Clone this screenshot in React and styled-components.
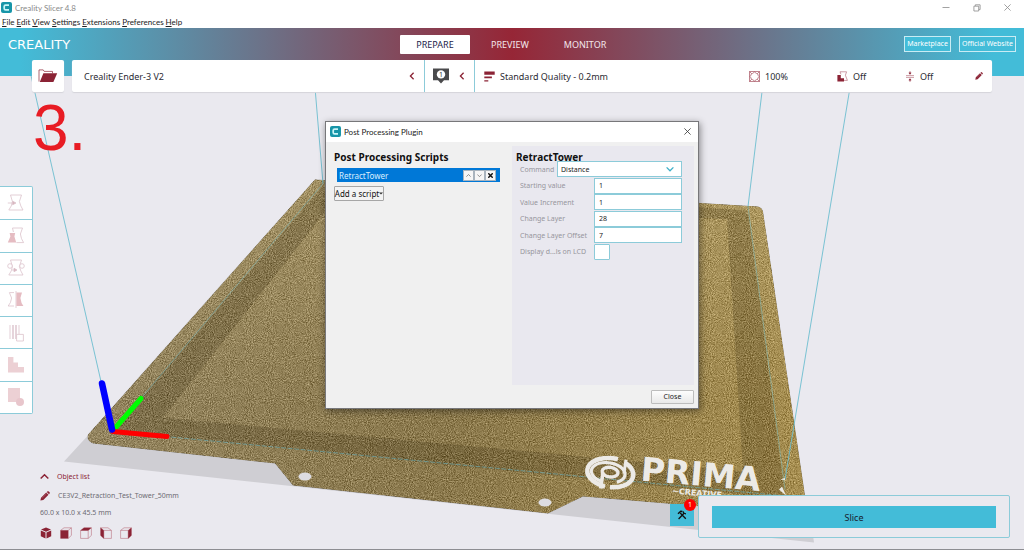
import React from 'react'
import styled, { createGlobalStyle, css } from 'styled-components'

const teal = '#43bcd8'
const line = '#8ccbd9'
const wine = '#8b2335'

const GlobalStyle = createGlobalStyle`
  * { box-sizing: border-box; }
  body {
    margin: 0;
    background: #eae9ef;
    font-family: "Noto Sans", "Open Sans", sans-serif;
    font-size: 9px;
    color: #2b2b33;
  }
  button, input, select { font: inherit; color: inherit; margin: 0; padding: 0; }
  button { background: none; border: 0; white-space: nowrap; }
  svg { display: block; flex: none; }
  h2, p { margin: 0; }
`

const Window = styled.div`
  display: flex;
  flex-direction: column;
  min-height: 100vh;
  border-bottom: 1px solid #8d8d92;
`

/* title bar + menu */

const TitleBar = styled.header`
  display: flex;
  align-items: center;
  height: 15px;
  padding: 0 13px 0 1px;
  gap: 3px;
  background: #fff;
  color: #8a8a8a;
  font-family: Lato, sans-serif;
  font-size: 8px;
`
const WindowControls = styled.div`
  display: flex;
  gap: 23px;
  margin-left: auto;
`
const PlainButton = styled.button`
  display: flex;
  align-items: center;
  justify-content: center;
`
const MenuBar = styled.nav`
  display: flex;
  align-items: center;
  height: 13px;
  padding-left: 2px;
  gap: 2px;
  background: #fff;
  font-family: Lato, sans-serif;
  font-size: 8px;
  line-height: 12px;
  color: #222;
`
const MenuItem = styled.button`
  display: block;
  &::first-letter { text-decoration: underline; }
`

/* workspace */

const Workspace = styled.main`
  position: relative;
  flex: 1;
  display: flex;
  flex-direction: column;
`
const Scene = styled.svg`
  position: absolute;
  inset: 0;
  width: 100%;
  height: 100%;
`
const Header = styled.div`
  position: relative;
  display: grid;
  grid-template-columns: 1fr auto 1fr;
  align-items: center;
  height: 48px;
  padding: 0 8px 16px;
  background: linear-gradient(90deg, ${ teal } 2%, #962636 50%, ${ teal } 97%);
`
const Brand = styled.div`
  font-family: "DejaVu Sans", sans-serif;
  font-size: 13px;
  color: #fff;
`
const Tabs = styled.div`
  display: flex;
  gap: 5px;
  margin-right: 4px;
`
const Tab = styled.button`
  width: 70px;
  height: 19px;
  color: #f3e6ea;
  ${ ({ active }) => active && css`
    background: #fff;
    color: #24224a;
    border-radius: 1px;
  ` }
`
const HeaderLinks = styled.div`
  display: flex;
  justify-content: flex-end;
  gap: 8px;
`
const HeaderLink = styled.a`
  padding: 0 2px;
  border: 1px solid #c9ecf4;
  background: ${ teal };
  color: #fff;
  font-size: 7px;
  line-height: 14px;
  text-decoration: none;
`

const Toolbar = styled.div`
  position: relative;
  display: flex;
  gap: 8px;
  margin: -16px 32px 0;
  height: 32px;
`
const OpenButton = styled(PlainButton)`
  width: 32px;
  background: #fff;
  border-radius: 2px;
  box-shadow: 0 1px 1px #d5d4da;
`
const Settings = styled.div`
  flex: 1;
  display: grid;
  grid-template-columns: 353px 50px 1fr;
  background: #fff;
  border-radius: 2px;
  box-shadow: 0 1px 1px #d5d4da;
`
const Section = styled.div`
  display: flex;
  align-items: center;
  justify-content: space-between;
  padding: 0 ${ ({ pad }) => pad || '9px' };
  border-right: 1px solid ${ line };
  &:last-child { border-right: 0; }
`
const Setting = styled.div`
  display: flex;
  align-items: center;
  gap: 5px;
  width: ${ ({ w }) => w || 'auto' };
  ${ ({ grow }) => grow && css`flex: 1;` }
`

const Body = styled.div`
  position: relative;
  flex: 1;
  display: flex;
  justify-content: space-between;
  align-items: stretch;
`
const LeftColumn = styled.div`
  display: flex;
  flex-direction: column;
`
const StepMark = styled.div`
  margin-bottom: 22px;
  padding-left: 33px;
  font-family: "Liberation Sans", Arial, sans-serif;
  font-size: 64px;
  line-height: 72px;
  color: #e81c24;
`
const Tools = styled.div`
  display: grid;
  grid-auto-rows: 1fr;
  width: 33px;
  height: 228px;
  background: #fff;
  border: 1px solid ${ line };
  border-left: 0;
  border-radius: 0 2px 2px 0;
`
const Tool = styled(PlainButton)`
  & + & { border-top: 1px solid ${ line }; }
`
const ObjectInfo = styled.section`
  display: flex;
  flex-direction: column;
  margin-top: auto;
  padding: 0 0 2px 40px;
  font-size: 7px;
  color: #6d6c74;
`
const InfoRow = styled.div`
  display: flex;
  align-items: center;
  gap: 8px;
  height: ${ ({ h }) => h || '19px' };
  color: ${ ({ accent }) => (accent ? wine : 'inherit') };
`

const Actions = styled.div`
  display: flex;
  align-items: flex-start;
  align-self: flex-end;
  gap: 4px;
  margin: 0 14px 11px 0;
`
const PluginButton = styled(PlainButton)`
  position: relative;
  width: 24px;
  height: 22px;
  margin-top: 9px;
  background: ${ teal };
`
const Badge = styled.span`
  position: absolute;
  top: -5px;
  right: -2px;
  width: 12px;
  height: 12px;
  border-radius: 50%;
  background: #f00;
  color: #fff;
  font-size: 7px;
  line-height: 12px;
`
const SlicePanel = styled.div`
  width: 312px;
  padding: 10px 13px 9px;
  background: #eae9ef;
  border: 1px solid ${ line };
  border-radius: 2px;
`
const SliceButton = styled.button`
  display: block;
  width: 100%;
  height: 22px;
  background: ${ teal };
  color: #17202c;
`

/* dialog */

const Overlay = styled.div`
  position: absolute;
  inset: 0;
  display: flex;
  justify-content: center;
  align-items: flex-start;
  padding-top: 93px;
`
const Dialog = styled.section`
  width: 374px;
  background: #f0f0f0;
  border: 1px solid #77777a;
  box-shadow: 1px 2px 7px rgba(0, 0, 0, 0.45);
`
const DialogTitle = styled.div`
  display: flex;
  align-items: center;
  gap: 3px;
  height: 20px;
  padding: 0 7px 1px 4px;
  background: #fff;
  color: #222;
  font-family: Lato, sans-serif;
  font-size: 8px;
  ${ PlainButton } { margin-left: auto; }
`
const DialogBody = styled.div`
  display: grid;
  grid-template-columns: 1fr 182px;
  gap: 12px;
  padding: 4px 4px 5px 8px;
`
const Heading = styled.h2`
  font-size: 10px;
  line-height: 14px;
  height: 11px;
  color: #111;
`
const Scripts = styled.div`
  padding-top: 4px;
`
const ScriptRow = styled.div`
  display: flex;
  align-items: center;
  height: 14px;
  margin: 7px 0 4px 3px;
  padding: 0 4px 0 2px;
  background: #0078d7;
  color: #d9efff;
  font-size: 8px;
  span { flex: 1; }
`
const MiniButton = styled(PlainButton)`
  width: 11px;
  height: 11px;
  background: #f6f6f6;
  border: 1px solid #a9b4be;
`
const AddButton = styled(PlainButton)`
  width: 50px;
  height: 15px;
  border: 1px solid #a6a6a6;
  border-radius: 1px;
  background: #f3f3f3;
  color: #111;
  font-size: 8px;
`
const ScriptSettings = styled.form`
  height: 239px;
  padding: 4px 12px 0 4px;
  background: #e9e8ef;
`
const Fields = styled.div`
  position: relative;
  display: grid;
  grid-template-rows: repeat(6, 1fr);
  height: 99px;
  padding-left: 4px;
  font-size: 7px;
`
const Field = styled.div`
  display: grid;
  grid-template-columns: ${ ({ wide }) => (wide ? '37px 1fr' : '74px 1fr') };
  align-items: center;
  label { color: #97969d; white-space: nowrap; }
`
const TextInput = styled.input`
  width: 100%;
  height: 16px;
  padding: 0 4px;
  border: 1px solid ${ line };
  background: #fff;
  color: #222;
  outline: 0;
`
const SelectBox = styled.div`
  display: grid;
  align-items: center;
  > * { grid-area: 1 / 1; }
  svg { justify-self: end; margin-right: 8px; pointer-events: none; }
`
const Select = styled.select`
  appearance: none;
  width: 100%;
  height: 16px;
  padding: 0 3px;
  border: 1px solid ${ line };
  border-radius: 0;
  background: #fff;
  color: #222;
`
const Check = styled.input`
  appearance: none;
  width: 16px;
  height: 16px;
  border: 1px solid ${ line };
  border-radius: 1px;
  background: #fff;
  margin: 0;
`
const DialogFooter = styled.div`
  display: flex;
  justify-content: flex-end;
  padding: 0 4px 4px;
`
const CloseButton = styled.button`
  width: 43px;
  height: 14px;
  border: 1px solid #bdbdbd;
  border-radius: 1px;
  background: linear-gradient(#fdfdfd, #e9e9e9);
  color: #222;
  font-size: 7px;
  line-height: 12px;
`

/* icons */

const AppIcon = () => (
    <svg width="11" height="11" viewBox="0 0 11 11">
        <rect width="11" height="11" rx="2" fill="#1795a8" />
        <path d="M8 3.2H4.6Q3.2 3.2 3.2 4.6V6.4Q3.2 7.8 4.6 7.8H8" fill="none" stroke="#c9f4f7" strokeWidth="1.7" />
    </svg>
)

const Cross = ({ size = 7, color = '#8a8a8a', w = 0.8 }) => (
    <svg width={size} height={size} viewBox="0 0 7 7" stroke={color} strokeWidth={w}>
        <path d="M.4.4l6.2 6.2M6.6.4L.4 6.6" />
    </svg>
)

const Chevron = ({ d, width = 8, height = 8, color = wine, w = 1.3 }) => (
    <svg width={width} height={height} viewBox="0 0 8 8" fill="none" stroke={color} strokeWidth={w}>
        <path d={d} />
    </svg>
)
const LEFT = 'M5.6 .8L2.4 4l3.2 3.2'
const UP = 'M.6 5.8L4 2.4l3.4 3.4'
const DOWN = 'M.6 2.4L4 5.8l3.4-3.4'

const Pencil = ({ size }) => (
    <svg width={size} height={size} viewBox="0 0 10 10" fill={wine}>
        <path d="M.4 9.6L1 6.7 6.2 1.5 8.5 3.8 3.3 9zM6.8 1L7.6.3Q8.2-.1 8.8.5L9.6 1.3Q10 1.9 9.6 2.5L9 3.2z" />
        <path d="M2.2 7L6.6 2.7" stroke="#c98e98" strokeWidth=".4" />
    </svg>
)

const Folder = () => (
    <svg width="20" height="14" viewBox="0 0 20 14">
        <path d="M1 12.6V.9h4.2l1 1.5h8.3v2" fill="none" stroke={wine} strokeWidth=".7" />
        <path d="M5.4 4.2h13.8L15.4 13H1.8z" fill={wine} />
    </svg>
)

const cubes = [
    { fills: ['M6 .6L11 2.6 6 4.8 1 2.6z', 'M.8 3.4L5.5 5.5V11.4L.8 9.2z', 'M11.2 3.4L6.5 5.5V11.4L11.2 9.2z'] },
    { box: true, fills: ['M.6 3.4h7.6v8H.6z'] },
    { box: true, fills: ['M.6 3.6L4 .8h7.4L8.2 3.6z'] },
    { box: true, flip: true, fills: ['M8.2 3.4L11.4.8V8.4L8.2 11.4z'] },
    { box: true, fills: ['M8.2 3.4L11.4.8V8.4L8.2 11.4z'] },
]

const Cube = ({ box, flip, fills }) => (
    <svg width="12" height="12" viewBox="0 0 12 12">
        <g transform={flip ? 'matrix(-1 0 0 1 12 0)' : undefined}>
            {box && (
                <path
                    d="M.6 3.4h7.6v8H.6zM.6 3.4L4 .8h7.4L8.2 3.4M11.4.8V8.4L8.2 11.4"
                    fill="none"
                    stroke="#b8717d"
                    strokeWidth=".6"
                />
            )}
            {fills.map((d) => <path key={d} d={d} fill={wine} />)}
        </g>
    </svg>
)

const tower = 'M3.5 1H14.5L12.4 7.5Q13.4 12 16 16H1.8Q5 12 5.4 7.5z'
const tools = [
    {
        name: 'Move',
        art: <><path d={tower} fill="none" /><path d="M.8 9h6" /><path d="M5.6 7.2L9 9 5.6 10.8z" fill="#d9b3bc" /></>,
    },
    {
        name: 'Scale',
        art: <><path d="M5.5 1H15.5L13.4 7Q14 12 16.6 15.6H9.4M5.5 1L6.4 5" fill="none" /><path d="M2.6 6H8.2L7.4 9.6 9.2 15.6H.8L3.4 9.6z" fill="#e5bcc2" stroke="none" /></>,
    },
    {
        name: 'Rotate',
        art: <><path d={tower} fill="none" /><circle cx="3" cy="7" r="2.3" fill="#fff" /><circle cx="15" cy="7" r="2.3" fill="#fff" /><path d="M5 11h3" /><path d="M7 9.2L10 11 7 12.8z" fill="#d9b3bc" /></>,
    },
    {
        name: 'Mirror',
        art: <><path d="M7 1.6H2.4L4.6 7Q4 12 1.2 15H7M9 0V17" fill="none" /><path d="M9.4 1.6H15L13.4 7Q14 12 16.4 15H9.4z" fill="#e5bcc2" stroke="none" /></>,
    },
    {
        name: 'Per model settings',
        art: <><path d="M3 1V15" /><path d="M6 1V15M9 1V15" strokeWidth="1.4" /><path d="M12 1V10" /><path d="M9.6 10.4H16.4V17H9.6z" fill="#fff" /></>,
    },
    {
        name: 'Support blocker',
        art: <path d="M1 1H6.4V6.4H11V11H17V16.6H1z" fill="#ecd0d4" stroke="none" />,
    },
    {
        name: 'Custom support',
        art: <g fill="#ecd0d4" stroke="none"><path d="M1 0H13V14H1z" /><circle cx="13" cy="14" r="4" fill="#e8c6cc" /></g>,
    },
]

const LayersIcon = () => (
    <svg width="11" height="11" viewBox="0 0 11 11" fill={wine}>
        <path d="M.3.6h10.400v3.200H.3zM.3 5.400h7.600v1.900H.3zM.3 9.200h4v1.200h-4z" />
    </svg>
)

const InfillIcon = () => (
    <svg width="11" height="11" viewBox="0 0 11 11" fill="none" stroke="#a6505f" strokeWidth=".7">
        <path d="M.5.5h10v10H.5z" />
        <path d="M3.600 2.400L5.500 1l1.900 1.400 1.300.3.3 1.500L10 5.500 9 6.900l-.4 1.400-1.300.4L5.500 10 3.700 8.700l-1.400-.4L2 6.900 1 5.500 2 4.100l.3-1.400z" />
        <path d="M.5.5l2 2M10.500.5l-2 2M.5 10.500l2-2M10.500 10.500l-2-2" />
    </svg>
)

const SupportIcon = () => (
    <svg width="11" height="11" viewBox="0 0 11 11">
        <path d="M3 .8h6.6L8.4 4.2 10.4 9.4H6.6M3 .8L4 3.4" fill="none" stroke="#b77481" strokeWidth=".7" />
        <path d="M.4 4h3.4v3.2h3.2v3.4H.4z" fill={wine} />
    </svg>
)

const AdhesionIcon = () => (
    <svg width="10" height="11" viewBox="0 0 10 11" fill={wine}>
        <path d="M1 4.6h8M1 6.4h8" stroke="#b77481" strokeWidth=".7" />
        <path d="M4.5.4h1v1.4h1L5 3.8 3.5 1.8h1zM4.5 10.6h1V9.2h1L5 7.2 3.5 9.2h1z" />
    </svg>
)

const ExtruderIcon = () => (
    <svg width="16" height="16" viewBox="0 0 16 16">
        <path d="M0 .4h16v11.8h-5L8 15.4 5 12.2H0z" fill="#4a4a4c" />
        <circle cx="8" cy="6.4" r="4.2" fill="#fff" />
        <text x="8" y="9" fontSize="7" textAnchor="middle" fill="#333">1</text>
    </svg>
)

const ToolsIcon = () => (
    <svg width="10" height="10" viewBox="0 0 10 10" fill="none" stroke="#111">
        <path d="M1.6 9L7 3.2M8.8 8.8L3.2 3" strokeWidth="1.3" />
        <path d="M1 3.8L3.8 1.2l1.6.2" strokeWidth="1.5" />
        <path d="M6.2 1.2Q6 3.6 9 3.8" strokeWidth="1.2" />
    </svg>
)

/* 3D view with the build plate */

const BuildPlate = () => (
    <Scene viewBox="0 28 1024 522" preserveAspectRatio="xMidYMid slice" aria-hidden="true">
        <defs>
            <linearGradient id="gold" x1="90" y1="0" x2="800" y2="0" gradientUnits="userSpaceOnUse">
                <stop offset="0" stopColor="#93845f" />
                <stop offset=".5" stopColor="#8a784c" />
                <stop offset="1" stopColor="#a58d50" />
            </linearGradient>
            <linearGradient id="far" x1="0" y1="180" x2="0" y2="400" gradientUnits="userSpaceOnUse">
                <stop offset="0" stopColor="#c0ae7c" stopOpacity=".4" />
                <stop offset="1" stopColor="#c0ae7c" stopOpacity="0" />
            </linearGradient>
            <filter id="grain" x="0" y="0" width="100%" height="100%" colorInterpolationFilters="sRGB">
                <feTurbulence type="fractalNoise" baseFrequency=".95" numOctaves="3" seed="4" />
                <feColorMatrix values="1 0 0 0 0  1 0 0 0 0  1 0 0 0 0  0 0 0 0 1" result="noise" />
                <feComposite in="SourceGraphic" in2="noise" operator="arithmetic" k2="1" k3=".5" k4="-.25" />
                <feComposite in2="SourceAlpha" operator="in" />
            </filter>
        </defs>

        <path d="M64 462L87 437 808 500 814 543z" fill="#cfced3" />
        <g filter="url(#grain)">
            <path
                d="M315 180L758 207Q762 208 763 212L808 516 690 506 583 497 548 514 293 486 275 464 93 444Q86 441 88 435z"
                fill="url(#gold)"
            />
            <path d="M315 180L758 207Q762 208 763 212L790 400H118z" fill="url(#far)" />
            <path
                d="M113 432L325 184 748 211 785 499zM163 418L743 472 727 220 338 196z"
                fillRule="evenodd"
                fill="#3d3213"
                fillOpacity=".24"
            />
        </g>
        <ellipse cx="305" cy="477" rx="6.5" ry="4" fill="#dddce1" />
        <ellipse cx="545" cy="503" rx="6.5" ry="4" fill="#dddce1" />

        <g fill="none" stroke="#6cbdcf" strokeWidth=".9">
            <path d="M31 76L101 382M314 76L323 184M764 76L748 207M852 76L785 480" />
            <path d="M113 432L323 184M748 207L785 490" strokeOpacity=".5" />
            <path d="M113 432L780 496" strokeOpacity=".6" strokeDasharray="5 1.5" />
        </g>

        <g fill="none" stroke="#eceae6" transform="rotate(8 609 473)">
            <path d="M616 458.600A24 14.500 0 1 0 607 487.500M623 461A24 14.500 0 0 1 612 487.400" strokeWidth="4.500" />
            <path d="M604 483A17 10 0 1 1 618 481.500" strokeWidth="3.200" />
            <path d="M603 490V473.500" strokeWidth="3.600" />
            <path d="M624 458V472" strokeWidth="3" />
            <ellipse cx="610" cy="472.500" rx="8" ry="4.800" strokeWidth="3.400" />
        </g>
        <g fill="#eceae6" fontFamily="DejaVu Sans, sans-serif">
            <text x="640" y="481" fontSize="33" fontWeight="bold" transform="rotate(5 640 481)">PRIMA</text>
            <text x="672" y="494" fontSize="8" fontWeight="bold" transform="rotate(5 672 494)">~CREATIVE~</text>
            <path d="M780 480l5-1.500v2zM782 487l4 9-7-6z" />
        </g>

        <g fill="none" strokeLinecap="round">
            <path d="M113 431L141 399" stroke="#0f0" strokeWidth="5" />
            <path d="M113 432L167 437" stroke="#f00" strokeWidth="5" />
            <path d="M102 384L112 430" stroke="#00f" strokeWidth="6.5" />
        </g>
    </Scene>
)

const PluginDialog = () => (
    <Overlay>
        <Dialog role="dialog" aria-label="Post Processing Plugin">
            <DialogTitle>
                <AppIcon />
                Post Processing Plugin
                <PlainButton aria-label="Close dialog"><Cross color="#333" /></PlainButton>
            </DialogTitle>
            <DialogBody>
                <Scripts>
                    <Heading>Post Processing Scripts</Heading>
                    <ScriptRow>
                        <span>RetractTower</span>
                        <MiniButton aria-label="Move up"><Chevron d={UP} width={5} height={5} color="#777" /></MiniButton>
                        <MiniButton aria-label="Move down"><Chevron d={DOWN} width={5} height={5} color="#777" /></MiniButton>
                        <MiniButton aria-label="Remove"><Cross size={5} color="#111" w={2} /></MiniButton>
                    </ScriptRow>
                    <AddButton>
                        Add a script
                        <svg width="4" height="3" viewBox="0 0 4 3"><path d="M0 .4h4L2 2.6z" fill="#333" /></svg>
                    </AddButton>
                </Scripts>
                <ScriptSettings>
                    <Heading>RetractTower</Heading>
                    <Fields>
                        <Field wide={1}>
                            <label htmlFor="command">Command</label>
                            <SelectBox>
                                <Select id="command"><option>Distance</option></Select>
                                <Chevron d={DOWN} color="#3fb0c9" />
                            </SelectBox>
                        </Field>
                        {[
                            ['start', 'Starting value', '1'],
                            ['increment', 'Value Increment', '1'],
                            ['layer', 'Change Layer', '28'],
                            ['offset', 'Change Layer Offset', '7'],
                        ].map(([id, label, value]) => (
                            <Field key={id}>
                                <label htmlFor={id}>{label}</label>
                                <TextInput id={id} defaultValue={value} />
                            </Field>
                        ))}
                        <Field>
                            <label htmlFor="lcd">Display d...ls on LCD</label>
                            <Check id="lcd" type="checkbox" />
                        </Field>
                    </Fields>
                </ScriptSettings>
            </DialogBody>
            <DialogFooter>
                <CloseButton>Close</CloseButton>
            </DialogFooter>
        </Dialog>
    </Overlay>
)

const App = () => {

    return (
        <Window>
            <GlobalStyle />
            <TitleBar>
                <AppIcon />
                Creality Slicer 4.8
                <WindowControls>
                    <PlainButton aria-label="Minimize">
                        <svg width="8" height="7" viewBox="0 0 8 7"><path d="M.5 3.5h7" stroke="#8a8a8a" strokeWidth=".8" /></svg>
                    </PlainButton>
                    <PlainButton aria-label="Restore">
                        <svg width="8" height="8" viewBox="0 0 8 8" fill="none" stroke="#8a8a8a" strokeWidth=".8">
                            <path d="M.9 2.2h4.8v4.8H.9zM2.3 2V.8h4.8v4.8H5.9" />
                        </svg>
                    </PlainButton>
                    <PlainButton aria-label="Close"><Cross /></PlainButton>
                </WindowControls>
            </TitleBar>
            <MenuBar>
                {['File', 'Edit', 'View', 'Settings', 'Extensions', 'Preferences', 'Help'].map((name) => (
                    <MenuItem key={name}>{name}</MenuItem>
                ))}
            </MenuBar>

            <Workspace>
                <BuildPlate />
                <Header>
                    <Brand>CREALITY</Brand>
                    <Tabs>
                        <Tab active={1}>PREPARE</Tab>
                        <Tab>PREVIEW</Tab>
                        <Tab>MONITOR</Tab>
                    </Tabs>
                    <HeaderLinks>
                        <HeaderLink href="#marketplace">Marketplace</HeaderLink>
                        <HeaderLink href="#website">Official Website</HeaderLink>
                    </HeaderLinks>
                </Header>
                <Toolbar>
                    <OpenButton aria-label="Open file"><Folder /></OpenButton>
                    <Settings>
                        <Section pad="8px 0 12px">
                            Creality Ender-3 V2
                            <Chevron d={LEFT} />
                        </Section>
                        <Section pad="8px">
                            <ExtruderIcon />
                            <Chevron d={LEFT} />
                        </Section>
                        <Section>
                            <Setting grow={1}><LayersIcon />Standard Quality - 0.2mm</Setting>
                            <Setting w="88px"><InfillIcon />100%</Setting>
                            <Setting w="68px"><SupportIcon />Off</Setting>
                            <Setting w="70px"><AdhesionIcon />Off</Setting>
                            <Pencil size={8} />
                        </Section>
                    </Settings>
                </Toolbar>

                <Body>
                    <LeftColumn>
                        <StepMark>3.</StepMark>
                        <Tools>
                            {tools.map(({ name, art }) => (
                                <Tool key={name} aria-label={name}>
                                    <svg width="18" height="18" viewBox="0 0 18 18" stroke="#dcc3cc" strokeWidth=".8">
                                        {art}
                                    </svg>
                                </Tool>
                            ))}
                        </Tools>
                        <ObjectInfo>
                            <InfoRow accent={1}><Chevron d={UP} width={9} height={9} />Object list</InfoRow>
                            <InfoRow><Pencil size={10} />CE3V2_Retraction_Test_Tower_50mm</InfoRow>
                            <InfoRow h="14px">60.0 x 10.0 x 45.5 mm</InfoRow>
                            <InfoRow h="28px">
                                {cubes.map((cube, i) => (
                                    <PlainButton key={i} aria-label={`View ${ i + 1 }`}><Cube {...cube} /></PlainButton>
                                ))}
                            </InfoRow>
                        </ObjectInfo>
                    </LeftColumn>
                    <Actions>
                        <PluginButton aria-label="Post processing">
                            <ToolsIcon />
                            <Badge>1</Badge>
                        </PluginButton>
                        <SlicePanel>
                            <SliceButton>Slice</SliceButton>
                        </SlicePanel>
                    </Actions>
                </Body>
                <PluginDialog />
            </Workspace>
        </Window>
    )
}

export default App
